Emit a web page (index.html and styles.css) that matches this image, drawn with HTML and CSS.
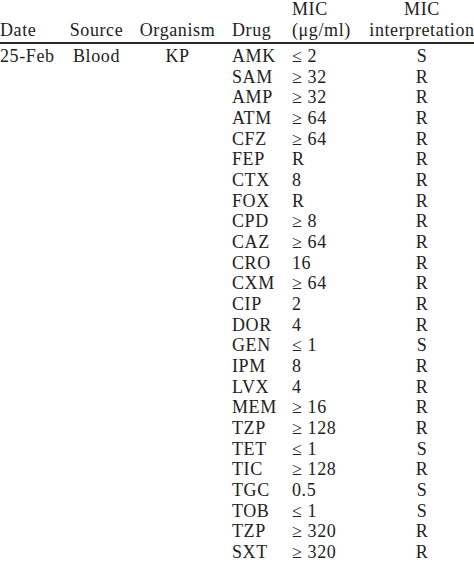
FILE: index.html
```html
<!DOCTYPE html>
<html>
<head>
<meta charset="utf-8">
<link rel="stylesheet" href="styles.css">
</head>
<body>
<table class="mic">
<colgroup>
<col class="c-date"><col class="c-src"><col class="c-org"><col class="c-drug"><col class="c-mic"><col class="c-int">
</colgroup>
<thead>
<tr>
<th class="l">Date</th>
<th>Source</th>
<th>Organism</th>
<th class="l drug">Drug</th>
<th class="micv">MIC<br>(μg/ml)</th>
<th>MIC<br>interpretation</th>
</tr>
</thead>
<tbody>
<tr><td class="l">25-Feb</td><td>Blood</td><td>KP</td><td class="drug">AMK</td><td class="l">≤ 2</td><td>S</td></tr>
<tr><td></td><td></td><td></td><td class="drug">SAM</td><td class="l">≥ 32</td><td>R</td></tr>
<tr><td></td><td></td><td></td><td class="drug">AMP</td><td class="l">≥ 32</td><td>R</td></tr>
<tr><td></td><td></td><td></td><td class="drug">ATM</td><td class="l">≥ 64</td><td>R</td></tr>
<tr><td></td><td></td><td></td><td class="drug">CFZ</td><td class="l">≥ 64</td><td>R</td></tr>
<tr><td></td><td></td><td></td><td class="drug">FEP</td><td class="l">R</td><td>R</td></tr>
<tr><td></td><td></td><td></td><td class="drug">CTX</td><td class="l">8</td><td>R</td></tr>
<tr><td></td><td></td><td></td><td class="drug">FOX</td><td class="l">R</td><td>R</td></tr>
<tr><td></td><td></td><td></td><td class="drug">CPD</td><td class="l">≥ 8</td><td>R</td></tr>
<tr><td></td><td></td><td></td><td class="drug">CAZ</td><td class="l">≥ 64</td><td>R</td></tr>
<tr><td></td><td></td><td></td><td class="drug">CRO</td><td class="l">16</td><td>R</td></tr>
<tr><td></td><td></td><td></td><td class="drug">CXM</td><td class="l">≥ 64</td><td>R</td></tr>
<tr><td></td><td></td><td></td><td class="drug">CIP</td><td class="l">2</td><td>R</td></tr>
<tr><td></td><td></td><td></td><td class="drug">DOR</td><td class="l">4</td><td>R</td></tr>
<tr><td></td><td></td><td></td><td class="drug">GEN</td><td class="l">≤ 1</td><td>S</td></tr>
<tr><td></td><td></td><td></td><td class="drug">IPM</td><td class="l">8</td><td>R</td></tr>
<tr><td></td><td></td><td></td><td class="drug">LVX</td><td class="l">4</td><td>R</td></tr>
<tr><td></td><td></td><td></td><td class="drug">MEM</td><td class="l">≥ 16</td><td>R</td></tr>
<tr><td></td><td></td><td></td><td class="drug">TZP</td><td class="l">≥ 128</td><td>R</td></tr>
<tr><td></td><td></td><td></td><td class="drug">TET</td><td class="l">≤ 1</td><td>S</td></tr>
<tr><td></td><td></td><td></td><td class="drug">TIC</td><td class="l">≥ 128</td><td>R</td></tr>
<tr><td></td><td></td><td></td><td class="drug">TGC</td><td class="l">0.5</td><td>S</td></tr>
<tr><td></td><td></td><td></td><td class="drug">TOB</td><td class="l">≤ 1</td><td>S</td></tr>
<tr><td></td><td></td><td></td><td class="drug">TZP</td><td class="l">≥ 320</td><td>R</td></tr>
<tr><td></td><td></td><td></td><td class="drug">SXT</td><td class="l">≥ 320</td><td>R</td></tr>
</tbody>
</table>
</body>
</html>
```
FILE: styles.css
```css
html, body {
  margin: 0;
  padding: 0;
  background: #ffffff;
  overflow: hidden;
}
body {
  width: 474px;
  height: 566px;
}
.mic {
  border-collapse: collapse;
  table-layout: fixed;
  width: 477px;
  margin-top: -1px;
  font-family: "Liberation Serif", "Times New Roman", serif;
  font-size: 18px;
  letter-spacing: 0.6px;
  color: #222222;
}
.c-date { width: 62px; }
.c-src { width: 69px; }
.c-org { width: 93px; }
.c-drug { width: 68px; }
.c-mic { width: 75px; }
.c-int { width: 110px; }
.mic th, .mic td {
  padding: 0;
  font-weight: normal;
  text-align: center;
  white-space: nowrap;
  line-height: 20.67px;
  vertical-align: bottom;
}
.mic thead th {
  line-height: 20.5px;
  padding-bottom: 2px;
  border-bottom: 2px solid #2a2a2a;
}
.mic thead th.micv {
  text-align: left;
}
.mic tbody tr:first-child td {
  padding-top: 2px;
}
.mic .l { text-align: left; }
.mic .drug { text-align: left; padding-left: 8px; }
```
